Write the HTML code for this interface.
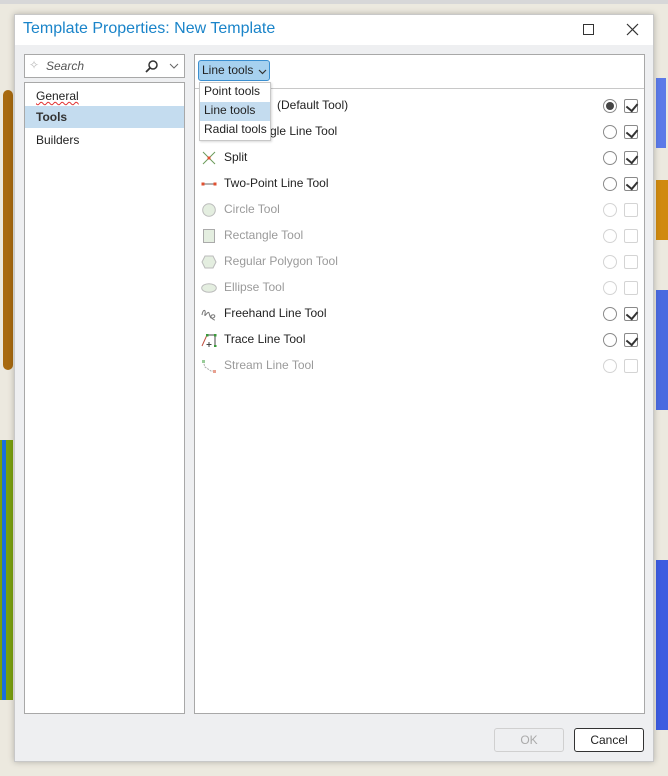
<!DOCTYPE html>
<html><head><style>
*{margin:0;padding:0;box-sizing:border-box}
body{width:668px;height:776px;overflow:hidden;position:relative;background:#ece9df;font-family:"Segoe UI","Liberation Sans",sans-serif;font-size:12px;color:#222}
.abs{position:absolute}
.dlg{left:14px;top:14px;width:640px;height:748px;background:#eeeff1;border:1px solid #c8c8c8;box-shadow:0 0 6px rgba(0,0,0,.25)}
.title{left:0;top:0;width:638px;height:30px;background:#fff}
.title span{position:absolute;left:8px;top:5px;font-size:16px;color:#1a84c9}
.row{position:absolute;left:0;height:26px;width:448px}
.row .ic{position:absolute;left:6px;top:6px;width:16px;height:14px}
.row .t{position:absolute;left:29px;top:5px;font-size:12px}
.dis .t{color:#9a9a9a}
.rad{position:absolute;left:408px;top:6px;width:14px;height:14px;border:1px solid #8a8a8a;border-radius:50%;background:#fff}
.cb{position:absolute;left:429px;top:6px;width:14px;height:14px;border:1px solid #8a8a8a;border-radius:2px;background:#fff}
.dis .rad,.dis .cb{border-color:#d4d4d4}
.cb.on:after{content:"";position:absolute;left:3px;top:1px;width:6px;height:8px;border:solid #333;border-width:0 2px 2px 0;transform:rotate(40deg)}
</style></head><body>
<div class="abs" style="left:0;top:0;width:668px;height:4px;background:#d7d7d8"></div>
<div class="abs" style="left:3px;top:90px;width:10px;height:280px;background:#a86a10;border-radius:5px"></div>
<div class="abs" style="left:0;top:440px;width:13px;height:260px;background:#7aa010"></div>
<div class="abs" style="left:2px;top:440px;width:4px;height:260px;background:#1a6fe0"></div>
<div class="abs" style="left:656px;top:78px;width:10px;height:70px;background:#5c7ae8"></div>
<div class="abs" style="left:656px;top:180px;width:12px;height:60px;background:#d08a10"></div>
<div class="abs" style="left:656px;top:290px;width:12px;height:120px;background:#4a6ae0"></div>
<div class="abs" style="left:656px;top:560px;width:12px;height:170px;background:#3c5ce0"></div>

<div class="abs dlg">
  <div class="abs title"><span>Template Properties: New Template</span>
    <div class="abs" style="left:568px;top:9px;width:11px;height:11px;border:1px solid #333"></div>
    <svg class="abs" style="left:611px;top:8px" width="13" height="13"><path d="M1 1L12 12M12 1L1 12" stroke="#333" stroke-width="1.2"/></svg>
  </div>
  <div class="abs" style="left:9px;top:39px;width:161px;height:24px;background:#fff;border:1px solid #a8a8a8">
    <span class="abs" style="left:4px;top:3px;color:#bbb;font-size:12px">✧</span>
    <span class="abs" style="left:21px;top:4px;font-style:italic;color:#555">Search</span>
    <svg class="abs" style="left:120px;top:4px" width="14" height="14"><circle cx="8" cy="6" r="4" fill="none" stroke="#333" stroke-width="1.5"/><line x1="5" y1="9" x2="1" y2="13" stroke="#333" stroke-width="1.8"/></svg>
    <svg class="abs" style="left:144px;top:8px" width="10" height="6"><polyline points="1,1 5,5 9,1" fill="none" stroke="#666"/></svg>
  </div>
  <div class="abs" style="left:9px;top:67px;width:161px;height:632px;background:#fff;border:1px solid #a8a8a8">
    <div class="abs" style="left:11px;top:6px;text-decoration:underline wavy #e03030;text-decoration-thickness:1px">General</div>
    <div class="abs" style="left:0;top:23px;width:159px;height:22px;background:#c4dcef"></div>
    <div class="abs" style="left:11px;top:27px;font-weight:bold;color:#333">Tools</div>
    <div class="abs" style="left:11px;top:50px">Builders</div>
  </div>
  <div class="abs" style="left:179px;top:39px;width:451px;height:660px;background:#fff;border:1px solid #a8a8a8">
    <div class="abs" style="left:0;top:33px;width:449px;height:1px;background:#c8c8c8"></div>
    <div class="abs" style="left:3px;top:5px;width:72px;height:21px;background:#a7d1ef;border:1px solid #3b8fd0;border-radius:3px">
      <span class="abs" style="left:3px;top:2px;color:#222">Line tools</span>
      <svg class="abs" style="left:59px;top:8px" width="9" height="6"><polyline points="1,1 4.5,4.5 8,1" fill="none" stroke="#333" stroke-width="1.2"/></svg>
    </div>
    <div class="row" style="top:38px"><div class="t" style="left:82px">(Default Tool)</div><div class="rad"><div style="position:absolute;left:2px;top:2px;width:8px;height:8px;border-radius:50%;background:#444"></div></div><div class="cb on"></div></div>
    <div class="row" style="top:64px"><div class="t" style="left:75px">gle Line Tool</div><div class="rad"></div><div class="cb on"></div></div>
    <div class="row" style="top:90px"><svg class="ic" viewBox="0 0 16 14"><line x1="2" y1="1" x2="14" y2="13" stroke="#6a9a5a"/><line x1="2" y1="13" x2="14" y2="1" stroke="#6a9a5a"/><rect x="6.5" y="5.5" width="3" height="3" fill="#e05030"/></svg><div class="t">Split</div><div class="rad"></div><div class="cb on"></div></div>
    <div class="row" style="top:116px"><svg class="ic" viewBox="0 0 16 14"><line x1="2" y1="7" x2="14" y2="7" stroke="#666"/><rect x="0.5" y="5.5" width="3" height="3" fill="#e05030"/><rect x="12.5" y="5.5" width="3" height="3" fill="#e05030"/></svg><div class="t">Two-Point Line Tool</div><div class="rad"></div><div class="cb on"></div></div>
    <div class="row dis" style="top:142px"><svg class="ic" viewBox="0 0 16 14"><circle cx="8" cy="7" r="6.3" fill="#e4eee0" stroke="#bbb"/></svg><div class="t">Circle Tool</div><div class="rad"></div><div class="cb"></div></div>
    <div class="row dis" style="top:168px"><svg class="ic" viewBox="0 0 16 14"><rect x="2.5" y="0.5" width="11" height="13" fill="#e4eee0" stroke="#aaa"/></svg><div class="t">Rectangle Tool</div><div class="rad"></div><div class="cb"></div></div>
    <div class="row dis" style="top:194px"><svg class="ic" viewBox="0 0 16 14"><polygon points="4,1 12,1 15,7 12,13 4,13 1,7" fill="#e4eee0" stroke="#bbb"/></svg><div class="t">Regular Polygon Tool</div><div class="rad"></div><div class="cb"></div></div>
    <div class="row dis" style="top:220px"><svg class="ic" viewBox="0 0 16 14"><ellipse cx="8" cy="7" rx="7.3" ry="4.3" fill="#e4eee0" stroke="#bbb"/></svg><div class="t">Ellipse Tool</div><div class="rad"></div><div class="cb"></div></div>
    <div class="row" style="top:246px"><svg class="ic" viewBox="0 0 16 14"><path d="M1 8 C2 2,5 2,4 7 S7 3,8 6 S9 12,12 11 S14 7,11 8 S12 13,14 13" fill="none" stroke="#777"/></svg><div class="t">Freehand Line Tool</div><div class="rad"></div><div class="cb on"></div></div>
    <div class="row" style="top:272px"><svg class="ic" viewBox="0 0 16 14"><path d="M1 13 L6 2" fill="none" stroke="#c05040"/><path d="M6 2 L14 2 L14 13" fill="none" stroke="#444"/><rect x="5" y="1" width="2.5" height="2.5" fill="#3a9a3a"/><rect x="13" y="1" width="2.5" height="2.5" fill="#3a9a3a"/><rect x="13" y="12" width="2.5" height="2.5" fill="#3a9a3a"/><path d="M8 9v5M5.5 11.5h5" stroke="#444"/></svg><div class="t">Trace Line Tool</div><div class="rad"></div><div class="cb on"></div></div>
    <div class="row dis" style="top:298px"><svg class="ic" viewBox="0 0 16 14"><path d="M2 2 L4 8 L10 12 L14 12" fill="none" stroke="#aaa" stroke-dasharray="2 1"/><rect x="1" y="1" width="3" height="3" fill="#9c9"/><rect x="12" y="11" width="3" height="3" fill="#e8a090"/></svg><div class="t">Stream Line Tool</div><div class="rad"></div><div class="cb"></div></div>
    <div class="abs" style="left:4px;top:27px;width:72px;height:59px;background:#fff;border:1px solid #c8c8c8;box-shadow:1px 1px 2px rgba(0,0,0,.15)">
      <div class="abs" style="left:4px;top:1px">Point tools</div>
      <div class="abs" style="left:0;top:19px;width:70px;height:19px;background:#c4dcef"></div>
      <div class="abs" style="left:4px;top:20px">Line tools</div>
      <div class="abs" style="left:4px;top:39px">Radial tools</div>
    </div>
  </div>
  <div class="abs" style="left:479px;top:713px;width:70px;height:24px;border:1px solid #d0d0d0;border-radius:3px;background:#eeeff1;color:#aaa;text-align:center;line-height:22px">OK</div>
  <div class="abs" style="left:559px;top:713px;width:70px;height:24px;border:1px solid #333;border-radius:3px;background:#fff;text-align:center;line-height:22px">Cancel</div>
</div>
</body></html>
